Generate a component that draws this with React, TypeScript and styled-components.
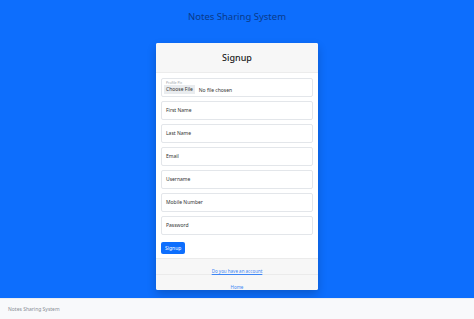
import React from "react";
import styled, { createGlobalStyle } from "styled-components";

const GlobalStyle = createGlobalStyle`
  *, *::before, *::after {
    box-sizing: border-box;
  }
  html, body {
    margin: 0;
    padding: 0;
    font-family: "Noto Sans", "Open Sans", sans-serif;
  }
`;

const fields = [
  "First Name",
  "Last Name",
  "Email",
  "Username",
  "Mobile Number",
  "Password",
];

export default function App() {
  return (
    <>
      <GlobalStyle />
      <Page>
        <Main>
          <Title>Notes Sharing System</Title>
          <Card>
            <CardHeader>Signup</CardHeader>
            <CardBody>
              <FileField>
                <FileLabel>Profile Pic</FileLabel>
                <FileRow>
                  <FileButton>Choose File</FileButton>
                  <FileText>No file chosen</FileText>
                </FileRow>
              </FileField>
              {fields.map((f) => (
                <Field key={f}>{f}</Field>
              ))}
              <SubmitRow>
                <Button>Signup</Button>
              </SubmitRow>
            </CardBody>
            <CardFooter>
              <FooterLink>Do you have an account</FooterLink>
            </CardFooter>
            <CardFooter>
              <FooterLink>Home</FooterLink>
            </CardFooter>
          </Card>
        </Main>
        <PageFooter>Notes Sharing System</PageFooter>
      </Page>
    </>
  );
}

const Page = styled.div`
  width: 474px;
  height: 319px;
  display: flex;
  flex-direction: column;
  overflow: hidden;
`;

const Main = styled.div`
  height: 298px;
  flex: none;
  background: #0d6efd;
  display: flex;
  flex-direction: column;
  align-items: center;
`;

const Title = styled.h1`
  margin: 8px 0 0;
  height: 17px;
  line-height: 17px;
  font-size: 9.5px;
  font-weight: 400;
  color: #0a3a8a;
`;

const Card = styled.div`
  margin-top: 18px;
  width: 162px;
  background: #fff;
  border-radius: 2px;
  box-shadow: 0 4px 10px rgba(0, 0, 0, 0.2);
  overflow: hidden;
`;

const CardHeader = styled.div`
  height: 30px;
  line-height: 30px;
  text-align: center;
  font-size: 9px;
  font-weight: 500;
  color: #222;
  background: #f7f7f7;
  border-bottom: 1px solid #ececec;
`;

const CardBody = styled.div`
  padding: 5px 5px 4px;
  display: flex;
  flex-direction: column;
  gap: 4px;
`;

const Field = styled.div`
  height: 19px;
  line-height: 17px;
  border: 1px solid #e3e6ea;
  border-radius: 2px;
  padding: 0 4px;
  font-size: 5px;
  color: #333;
`;

const FileField = styled.div`
  height: 19px;
  border: 1px solid #e3e6ea;
  border-radius: 2px;
  padding: 1px 2px 0;
`;

const FileLabel = styled.div`
  font-size: 3.5px;
  line-height: 5px;
  color: #9aa0a6;
  padding-left: 2px;
`;

const FileRow = styled.div`
  display: flex;
  align-items: center;
  gap: 4px;
`;

const FileButton = styled.span`
  background: #e9ecef;
  font-size: 5px;
  line-height: 9px;
  padding: 0 2px;
  color: #333;
`;

const FileText = styled.span`
  font-size: 5px;
  color: #333;
`;

const SubmitRow = styled.div`
  display: flex;
  padding-top: 3px;
`;

const Button = styled.button`
  background: #0d6efd;
  color: #fff;
  border: none;
  border-radius: 2px;
  height: 12px;
  padding: 0 4px;
  font-family: inherit;
  font-size: 5px;
`;

const CardFooter = styled.div`
  height: 16px;
  line-height: 16px;
  text-align: center;
  background: #f7f7f7;
  border-top: 1px solid #ebebeb;
`;

const FooterLink = styled.a`
  font-size: 4.5px;
  color: #3d86f5;
  text-decoration: underline;
`;

const PageFooter = styled.div`
  flex: 1;
  background: #f8f9fb;
  border-top: 1px solid #eceef2;
  padding-left: 8px;
  line-height: 20px;
  font-size: 5px;
  color: #8a8f96;
`;
